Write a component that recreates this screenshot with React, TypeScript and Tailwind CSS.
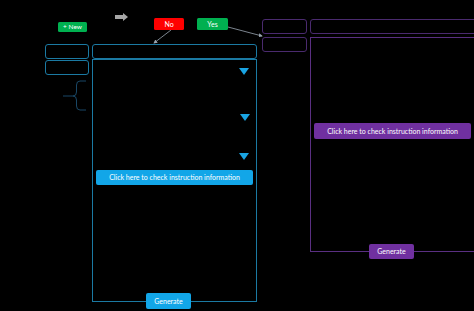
import React from "react";

function Tri() {
  return (
    <svg width="10" height="8" viewBox="0 0 10 8" className="block">
      <polygon points="0,0 10,0 5,7" fill="#19a4e3" />
    </svg>
  );
}

function Tag({ color, children, className }: { color: string; children: React.ReactNode; className: string }) {
  return (
    <div className={`absolute rounded-[1.5px] flex items-center justify-center text-white leading-none ${color} ${className}`}>
      {children}
    </div>
  );
}

export default function App() {
  return (
    <div className="relative w-[474px] h-[311px] bg-black overflow-hidden font-['Lato',sans-serif]">
      {/* connector lines and small drawings */}
      <svg className="absolute left-0 top-0" width="474" height="311" viewBox="0 0 474 311">
        <defs>
          <marker id="ah" markerWidth="5" markerHeight="5" refX="4" refY="2.5" orient="auto">
            <polygon points="0,0 5,2.5 0,5" fill="#9aa6b2" />
          </marker>
        </defs>
        <line x1="171" y1="30" x2="154" y2="43" stroke="#9aa6b2" strokeWidth="0.8" markerEnd="url(#ah)" />
        <line x1="228" y1="27" x2="262" y2="36" stroke="#9aa6b2" strokeWidth="0.8" markerEnd="url(#ah)" />
        <path d="M86 81 H80 Q76.5 81 76.5 85 V92 Q76.5 96 73 96 H63 M73 96 Q76.5 96 76.5 100 V106 Q76.5 110 80 110 H86" fill="none" stroke="#1c4f72" strokeWidth="0.9" />
        <polygon points="115,15 123,15 123,13 128,17 123,21 123,19 115,19" fill="#a6a6a6" />
      </svg>

      {/* diagram nodes on the canvas */}
      <Tag color="bg-[#00b050]" className="left-[58px] top-[22px] w-[29px] h-[10px] text-[6.5px]">+ New</Tag>
      <Tag color="bg-[#ff0000]" className="left-[154px] top-[18px] w-[30px] h-[12px] text-[7px]">No</Tag>
      <Tag color="bg-[#00b050]" className="left-[197px] top-[18px] w-[31px] h-[12px] text-[7px]">Yes</Tag>

      {/* cyan group */}
      <div className="absolute left-[45px] top-[44px] flex gap-[3px]">
        <div className="flex flex-col gap-px w-[44px]">
          <div className="h-[15px] rounded-[3px] border border-[#1b7aa3]" />
          <div className="h-[15px] rounded-[3px] border border-[#1b7aa3]" />
        </div>
        <div className="flex flex-col w-[165px]">
          <div className="h-[15px] rounded-[3px] border border-[#1b7aa3]" />
          <div className="relative h-[243px] border-[1.5px] border-[#1b7aa3] flex flex-col px-[3px] pt-[8px]">
            <div className="flex justify-end pr-[4px]"><Tri /></div>
            <div className="flex justify-end pr-[3px] mt-[38px]"><Tri /></div>
            <div className="flex justify-end pr-[4px] mt-[31px]"><Tri /></div>
            <div className="mt-[9px] h-[15px] rounded-[2px] bg-[#12a6e8] flex items-center justify-center text-white text-[7px] leading-none whitespace-nowrap">
              Click here to check instruction information
            </div>
            <div className="absolute left-[53px] -bottom-[8px] w-[45px] h-[16px] rounded-[2px] bg-[#12a6e8] flex items-center justify-center text-white text-[7px] leading-none">
              Generate
            </div>
          </div>
        </div>
      </div>

      {/* purple group */}
      <div className="absolute left-[262px] top-[19px] flex gap-[3px]">
        <div className="flex flex-col gap-[3px] w-[45px]">
          <div className="h-[15px] rounded-[3px] border border-[#4a2a6e]" />
          <div className="h-[15px] rounded-[3px] border border-[#4a2a6e]" />
        </div>
        <div className="flex flex-col gap-[3px] w-[170px]">
          <div className="h-[15px] rounded-[3px] border border-[#4a2a6e]" />
          <div className="relative h-[215px] border border-[#5a2f82] flex flex-col pl-[3px] pr-[2px] pt-[85px]">
            <div className="w-[157px] h-[16px] rounded-[2px] bg-[#7030a0] flex items-center justify-center text-white text-[7px] leading-none whitespace-nowrap">
              Click here to check instruction information
            </div>
            <div className="absolute left-[58px] -bottom-[8px] w-[45px] h-[15px] rounded-[2px] bg-[#7030a0] flex items-center justify-center text-white text-[7px] leading-none">
              Generate
            </div>
          </div>
        </div>
      </div>
    </div>
  );
}
